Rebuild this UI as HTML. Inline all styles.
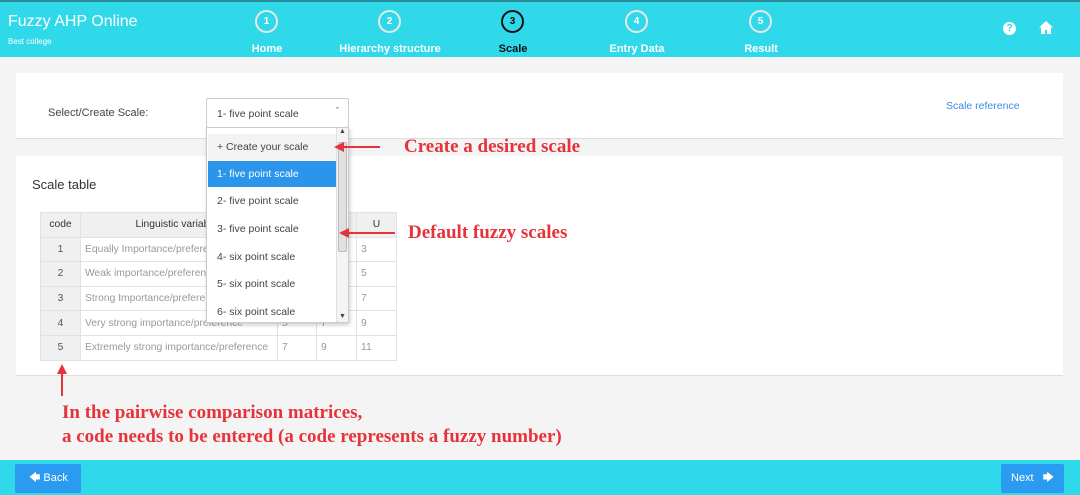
<!DOCTYPE html>
<html><head><style>
*{box-sizing:border-box;margin:0;padding:0}
body{width:1080px;height:495px;overflow:hidden;background:#f4f4f4;font-family:"Liberation Sans",sans-serif;position:relative;font-size:11px;color:#333}
.hdr{position:absolute;left:0;top:0;width:1080px;height:57px;background:#30d9ea;border-top:2px solid #2a8a96}
.abs{position:absolute}
.circ{position:absolute;width:23px;height:23px;border:2px solid #e8e8e8;border-radius:50%;color:#fff;font-size:10px;font-weight:bold;text-align:center;line-height:19px}
.lbl{position:absolute;color:#fff;font-weight:bold;font-size:11px;top:41px;transform:translateX(-50%);white-space:nowrap}
.card{position:absolute;background:#fff;border-bottom:1px solid #ddd}
table{border-collapse:collapse;position:absolute;left:40px;top:212px;font-size:10.3px;white-space:nowrap;table-layout:fixed;width:357px}
td{border:1px solid #e2e2e2;height:24.6px;padding:0 4px;color:#999;overflow:hidden}
td.c{background:#f0f0f0;color:#555;text-align:center}
.red{color:#e53339;font-family:"Liberation Serif",serif;font-weight:bold;font-size:19px;position:absolute;white-space:nowrap}
.dd{position:absolute;left:206px;top:127px;width:143px;height:196px;background:#fff;border:1px solid #ccc;box-shadow:1px 2px 4px rgba(0,0,0,.2)}
.it{position:absolute;left:1px;width:128px;height:26px;line-height:26px;padding-left:9px;color:#444;font-size:10.5px}
.btn{position:absolute;top:464px;height:29px;background:#2a9bf0;border-radius:2px;color:#fff;font-size:11px;line-height:29px}
</style></head><body>
<div class="hdr">
<div class="abs" style="left:8px;top:11px;color:#fff;font-size:16px">Fuzzy AHP Online</div>
<div class="abs" style="left:8px;top:35px;color:#fff;font-size:8px">Best college</div>
<div class="circ" style="left:255px;top:8px">1</div><div class="lbl" style="left:267px">Home</div>
<div class="circ" style="left:378px;top:8px">2</div><div class="lbl" style="left:390px">Hierarchy structure</div>
<div class="circ" style="left:501px;top:8px;border-color:#111;color:#111">3</div><div class="lbl" style="left:513px;color:#111">Scale</div>
<div class="circ" style="left:625px;top:8px">4</div><div class="lbl" style="left:637px">Entry Data</div>
<div class="circ" style="left:749px;top:8px">5</div><div class="lbl" style="left:761px">Result</div>
<div class="abs" style="left:1003px;top:20px;width:13px;height:13px;border-radius:50%;background:#fff;color:#30d9ea;font-size:10px;font-weight:bold;text-align:center;line-height:13px">?</div>
<svg class="abs" style="left:1038px;top:18px" width="16" height="15" viewBox="0 0 16 15"><path d="M8 1L1 7.5h2V14h4v-4h2v4h4V7.5h2z" fill="#fff"/></svg>
</div>
<div class="card" style="left:16px;top:73px;width:1047px;height:66px">
<div class="abs" style="left:32px;top:34px;color:#444">Select/Create Scale:</div>
<div class="abs" style="left:930px;top:27px;color:#3a8de0;font-size:10.5px">Scale reference</div>
</div>
<div class="abs" style="left:206px;top:98px;width:143px;height:30px;background:#fff;border:1px solid #ccc;border-radius:2px;padding:9px 10px;color:#444;font-size:10.5px">1- five point scale<span style="position:absolute;right:9px;top:7px;font-size:9px">&#710;</span></div>
<div class="card" style="left:16px;top:156px;width:1047px;height:220px">
<div class="abs" style="left:16px;top:21px;font-size:13px;color:#333">Scale table</div>
</div>
<table>
<tr><td class="c" style="width:40px;color:#333">code</td><td class="c" style="width:197px;color:#333">Linguistic variables</td><td class="c" style="width:39px;color:#333">L</td><td class="c" style="width:40px;color:#333">M</td><td class="c" style="width:40px;color:#333">U</td></tr>
<tr><td class="c">1</td><td>Equally Importance/preference</td><td>1</td><td>1</td><td>3</td></tr>
<tr><td class="c">2</td><td>Weak importance/preference</td><td>1</td><td>3</td><td>5</td></tr>
<tr><td class="c">3</td><td>Strong Importance/preference</td><td>3</td><td>5</td><td>7</td></tr>
<tr><td class="c">4</td><td>Very strong importance/preference</td><td>5</td><td>7</td><td>9</td></tr>
<tr><td class="c">5</td><td>Extremely strong importance/preference</td><td>7</td><td>9</td><td>11</td></tr>
</table>
<div class="dd">
<div class="it" style="top:6px;background:#f3f3f3">+ Create your scale</div>
<div class="it" style="top:33px;background:#2a95ea;color:#fff">1- five point scale</div>
<div class="it" style="top:60px">2- five point scale</div>
<div class="it" style="top:88px">3- five point scale</div>
<div class="it" style="top:116px">4- six point scale</div>
<div class="it" style="top:143px">5- six point scale</div>
<div class="it" style="top:171px">6- six point scale</div>
<div class="abs" style="left:129px;top:0;width:12px;height:194px;background:#f4f4f4;border-left:1px solid #e0e0e0"></div>
<div class="abs" style="left:131px;top:14px;width:9px;height:110px;background:#e0e0e0;border:1px solid #bbb;border-radius:2px"></div>
<div class="abs" style="left:132px;top:0;font-size:7px;color:#444">&#9650;</div>
<div class="abs" style="left:132px;top:185px;font-size:7px;color:#444">&#9660;</div>
</div>
<svg class="abs" style="left:0;top:0" width="1080" height="495">
<g stroke="#e53339" stroke-width="2" fill="#e53339">
<line x1="340" y1="147" x2="380" y2="147"/><path d="M334 147l10-5v10z" stroke="none"/>
<line x1="345" y1="233" x2="395" y2="233"/><path d="M339 233l10-5v10z" stroke="none"/>
<line x1="62" y1="372" x2="62" y2="396"/><path d="M62 364l-5 10h10z" stroke="none"/>
</g></svg>
<div class="red" style="left:404px;top:136px">Create a desired scale</div>
<div class="red" style="left:408px;top:222px">Default fuzzy scales</div>
<div class="red" style="left:62px;top:402px">In the pairwise comparison matrices,</div>
<div class="red" style="left:62px;top:426px">a code needs to be entered (a code represents a fuzzy number)</div>
<div class="abs" style="left:0;top:460px;width:1080px;height:35px;background:#30d9ea"></div>
<div class="btn" style="left:15px;width:66px;padding-left:14px"><span style="font-size:11px">&#129092;</span> Back</div>
<div class="btn" style="left:1001px;width:63px;padding-left:10px">Next <span style="margin-left:6px">&#129094;</span></div>
</body></html>
